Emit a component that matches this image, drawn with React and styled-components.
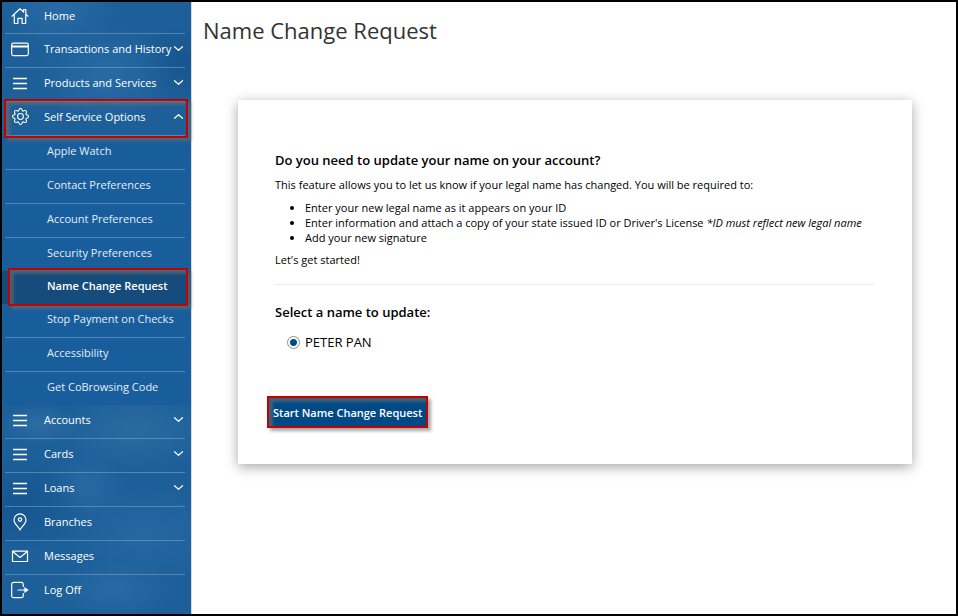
import { useState } from "react";
import styled, { createGlobalStyle, css } from "styled-components";
import { BsGear } from "react-icons/bs";

const GlobalStyle = createGlobalStyle`
  *, *::before, *::after { box-sizing: border-box; }
  body {
    margin: 0;
    background: #fff;
    color: #000;
    font-family: "Open Sans", "Noto Sans", sans-serif;
    font-size: 11px;
  }
`;

const Frame = styled.div`
  display: flex;
  min-height: 100vh;
  border: 2px solid #000;
`;

const Sidebar = styled.nav`
  flex: 0 0 190px;
  border-right: 1px solid #d3dae2;
  background:
    radial-gradient(ellipse 60px 40px at 30% 1%, rgba(52, 120, 176, 0.5), transparent),
    radial-gradient(ellipse 70px 50px at 55% 12%, rgba(52, 120, 176, 0.5), transparent),
    radial-gradient(ellipse 50px 40px at 95% 10%, rgba(15, 70, 125, 0.4), transparent),
    radial-gradient(ellipse 40px 20px at 20% 69%, rgba(60, 125, 170, 0.5), transparent),
    radial-gradient(ellipse 80px 40px at 70% 70%, rgba(50, 116, 165, 0.6), transparent),
    radial-gradient(ellipse 60px 50px at 10% 82%, rgba(15, 76, 135, 0.5), transparent),
    radial-gradient(ellipse 40px 30px at 45% 79%, rgba(50, 116, 170, 0.5), transparent),
    radial-gradient(ellipse 80px 50px at 75% 87%, rgba(44, 110, 165, 0.6), transparent),
    radial-gradient(ellipse 60px 30px at 60% 96%, rgba(50, 118, 176, 0.5), transparent),
    #1d5f99;
`;

const NavList = styled.ul`
  list-style: none;
  margin: 0;
  padding: 0;
`;

const highlight = css`
  border: 2px solid #c40000;
  box-shadow:
    3px 3px 3px rgba(110, 110, 110, 0.6),
    inset 4px 4px 3px rgba(110, 110, 110, 0.6);
`;

const NavItem = styled.li`
  position: relative;

  /* separator stops short of the sidebar edges */
  &::after {
    content: "";
    display: ${({ $line }) => ($line ? "block" : "none")};
    height: 1px;
    margin: 0 6px 0 3px;
    background: rgba(160, 195, 225, 0.4);
  }
`;

const NavLink = styled.a`
  display: flex;
  align-items: center;
  height: ${({ $first }) => ($first ? "31px" : "33px")};
  padding: 0 7px 4px 8px;
  color: #fff;
  font-weight: 400;
  text-decoration: none;
  white-space: nowrap;
`;

const NavIcon = styled.span`
  display: flex;
  justify-content: center;
  width: 20px;
  margin-right: 14px;
`;

const NavText = styled.span`flex: 1;`;

const SubList = styled(NavList)`
  background: #185e9c;
`;

const SubLink = styled(NavLink)`
  padding-left: 45px;
  color: ${({ $active }) => ($active ? "#fff" : "#e3edf6")};
  background: ${({ $active }) => ($active ? "#154c7c" : "transparent")};
  font-weight: ${({ $active }) => ($active ? 600 : 400)};
`;

const Marker = styled.span`
  position: absolute;
  z-index: 1;
  inset: -3px 3px -2px ${({ $indent }) => ($indent ? "6px" : "2px")};
  pointer-events: none;
  ${highlight}
`;

const Main = styled.main`
  flex: 1;
  min-width: 0;
  padding: 13px 44px 14px 46px;
`;

const Title = styled.h1`
  margin: 0 0 55px -35px;
  color: #333;
  font-size: 22px;
  font-weight: 400;
  line-height: 30px;
`;

const Card = styled.section`
  padding: 50px 37px 36px;
  background: #fff;
  box-shadow: 0 3px 12px rgba(0, 0, 0, 0.35);
`;

const Heading = styled.h2`
  margin: 0;
  font-size: 13px;
  font-weight: 600;
  line-height: 20px;
`;

const Text = styled.p`
  margin: 7px 0;
  line-height: 15px;
`;

const Steps = styled.ul`
  margin: 8px 0 7px;
  padding-left: 30px;
  line-height: 15px;
`;

const Divider = styled.hr`
  margin: 17px 0;
  border: 0;
  border-top: 1px solid #ebebeb;
`;

const NameOption = styled.label`
  display: flex;
  align-items: center;
  gap: 5px;
  margin: 10px 0 44px 12px;
  font-size: 13px;
  line-height: 20px;
`;

const Radio = styled.input`
  appearance: none;
  width: 13px;
  height: 13px;
  margin: 0;
  border: 1px solid #8d8d8d;
  border-radius: 50%;
  background: #fff;
  &:checked { background: radial-gradient(circle, #004a86 3px, #fff 4px); }
`;

const StartButton = styled.button`
  display: block;
  height: 32px;
  margin: 0 0 0 -8px;
  padding: 0 4px;
  background: #004987;
  color: #fff;
  font-family: inherit;
  font-size: 11px;
  font-weight: 600;
  ${highlight}
`;

const Svg = ({ children, w = 18, h = 18 }) => (
  <svg width={w} height={h} viewBox={`0 0 ${w} ${h}`} fill="none" stroke="#fff" strokeWidth="1.2" strokeLinejoin="round" strokeLinecap="round" aria-hidden="true">
    {children}
  </svg>
);

const icons = {
  home: <Svg><path d="M1 9.2 9 1.8l3.6 3.3V2.5h2.2v4.7L17 9.2M3.3 7.8v8.7h3.6v-5.2h4.2v5.2h3.6V7.8" /></Svg>,
  card: <Svg><rect x="0.7" y="3.2" width="16.6" height="12.4" rx="1.5" /><path d="M1 6.4h16" strokeWidth="2" /></Svg>,
  lines: <Svg><path d="M2 4.5h14M2 9.5h14M2 14.5h14" strokeLinecap="butt" strokeWidth="1.3" /></Svg>,
  gear: <BsGear size={17} color="#fff" />,
  pin: <Svg><path d="M9 17C7.5 13.6 3 10.8 3 6.9a6 6 0 0 1 12 0C15 10.8 10.5 13.6 9 17z" /><circle cx="9" cy="6.6" r="1.7" /></Svg>,
  mail: <Svg><rect x="1.5" y="4.1" width="15" height="10.4" /><path d="m1.7 4.5 7.3 6 7.3-6" /></Svg>,
  logoff: <Svg><path d="M12.3 5.5V3.2a1.8 1.8 0 0 0-1.8-1.8h-8A1.8 1.8 0 0 0 .7 3.2v11.6a1.8 1.8 0 0 0 1.8 1.8h8a1.8 1.8 0 0 0 1.8-1.8v-2.3M7 9h7" /><path d="M13.7 6.6 17.3 9l-3.6 2.4z" fill="#fff" strokeWidth="0.6" /></Svg>,
};

const Chevron = ({ up }) => (
  <Svg w={11} h={7}>
    <path d={up ? "m1.5 5.3 4-3.6 4 3.6" : "m1.5 1.7 4 3.6 4-3.6"} />
  </Svg>
);

const subItems = [
  { label: "Apple Watch", line: true },
  { label: "Contact Preferences", line: true },
  { label: "Account Preferences", line: true },
  { label: "Security Preferences" },
  { label: "Name Change Request", active: true },
  { label: "Stop Payment on Checks", line: true },
  { label: "Accessibility", line: true },
  { label: "Get CoBrowsing Code" },
];

const navItems = [
  { label: "Home", icon: "home" },
  { label: "Transactions and History", icon: "card", menu: true },
  { label: "Products and Services", icon: "lines", menu: true },
  { label: "Self Service Options", icon: "gear", menu: true, children: subItems },
  { label: "Accounts", icon: "lines", menu: true },
  { label: "Cards", icon: "lines", menu: true },
  { label: "Loans", icon: "lines", menu: true },
  { label: "Branches", icon: "pin" },
  { label: "Messages", icon: "mail" },
  { label: "Log Off", icon: "logoff" },
];

const App = () => {
  const [name, setName] = useState("PETER PAN");

  return (
    <>
      <GlobalStyle />
      <Frame>
        <Sidebar>
          <NavList>
            {navItems.map(({ label, icon, menu, children }, i) => [
              <NavItem key={label} $line={i < navItems.length - 1}>
                <NavLink href="#" $first={i === 0}>
                  <NavIcon>{icons[icon]}</NavIcon>
                  <NavText>{label}</NavText>
                  {menu && <Chevron up={Boolean(children)} />}
                </NavLink>
                {children && <Marker />}
              </NavItem>,
              children && (
                <li key={`${label}-menu`}>
                  <SubList>
                    {children.map((sub) => (
                      <NavItem key={sub.label} $line={sub.line}>
                        <SubLink href="#" $active={sub.active}>{sub.label}</SubLink>
                        {sub.active && <Marker $indent />}
                      </NavItem>
                    ))}
                  </SubList>
                </li>
              ),
            ])}
          </NavList>
        </Sidebar>
        <Main>
          <Title>Name Change Request</Title>
          <Card>
            <Heading>Do you need to update your name on your account?</Heading>
            <Text>This feature allows you to let us know if your legal name has changed. You will be required to:</Text>
            <Steps>
              <li>Enter your new legal name as it appears on your ID</li>
              <li>Enter information and attach a copy of your state issued ID or Driver's License <em>*ID must reflect new legal name</em></li>
              <li>Add your new signature</li>
            </Steps>
            <Text>Let's get started!</Text>
            <Divider />
            <Heading>Select a name to update:</Heading>
            <NameOption>
              <Radio
                type="radio"
                name="name"
                value="PETER PAN"
                checked={name === "PETER PAN"}
                onChange={(e) => setName(e.target.value)}
              />
              PETER PAN
            </NameOption>
            <StartButton type="button">Start Name Change Request</StartButton>
          </Card>
        </Main>
      </Frame>
    </>
  );
};

export default App;
